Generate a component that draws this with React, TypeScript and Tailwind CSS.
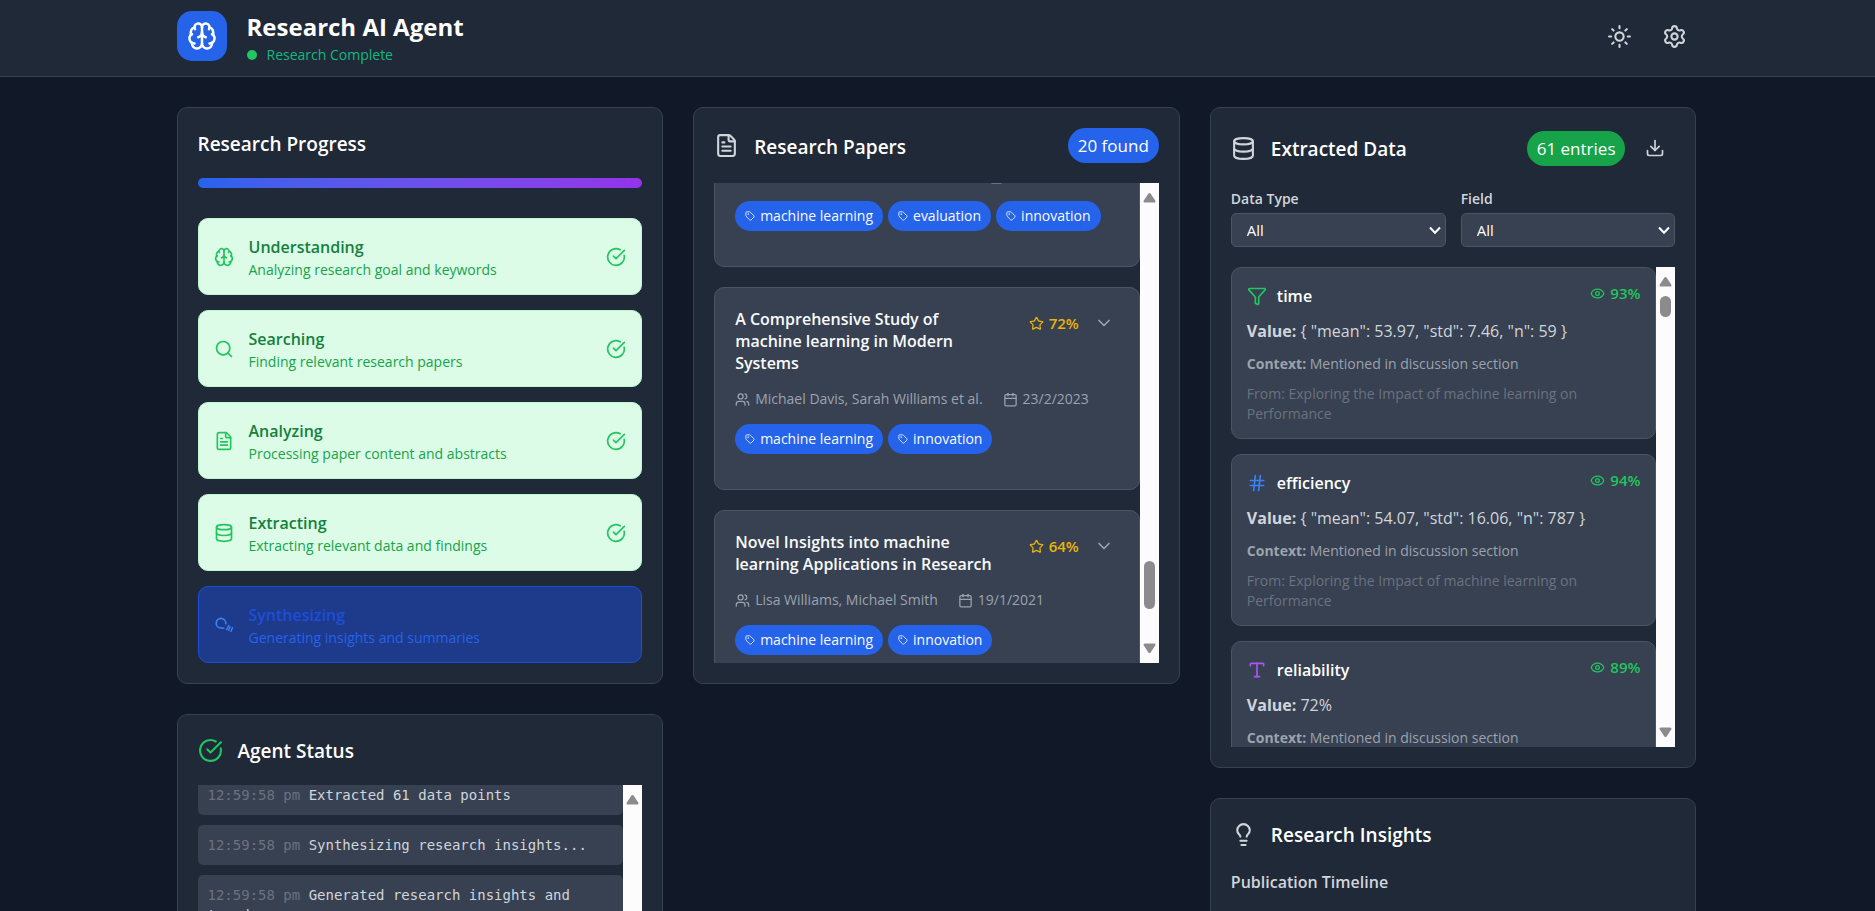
import React, { useEffect, useRef } from 'react';
import {
  Brain,
  Calendar,
  ChevronDown,
  CircleCheckBig,
  Database,
  Download,
  Eye,
  FileText,
  Funnel,
  Hash,
  Lightbulb,
  Search,
  Settings,
  Star,
  Sun,
  Tag,
  Type,
  Users,
  type LucideIcon,
} from 'lucide-react';

interface Step {
  title: string;
  description: string;
  icon: LucideIcon;
}

interface Paper {
  title: string;
  authors: string;
  date: string;
  score: number;
  tags: string[];
}

interface Entry {
  field: string;
  icon: LucideIcon;
  iconColor: string;
  value: string;
  confidence: number;
}

const steps: Step[] = [
  { title: 'Understanding', description: 'Analyzing research goal and keywords', icon: Brain },
  { title: 'Searching', description: 'Finding relevant research papers', icon: Search },
  { title: 'Analyzing', description: 'Processing paper content and abstracts', icon: FileText },
  { title: 'Extracting', description: 'Extracting relevant data and findings', icon: Database },
];

const papers: Paper[] = [
  {
    title: 'Exploring the Impact of machine learning on Performance',
    authors: 'Lisa Williams, Emma Brown et al.',
    date: '14/3/2022',
    score: 75,
    tags: ['machine learning', 'evaluation', 'innovation'],
  },
  {
    title: 'A Comprehensive Study of machine learning in Modern Systems',
    authors: 'Michael Davis, Sarah Williams et al.',
    date: '23/2/2023',
    score: 72,
    tags: ['machine learning', 'innovation'],
  },
  {
    title: 'Novel Insights into machine learning Applications in Research',
    authors: 'Lisa Williams, Michael Smith',
    date: '19/1/2021',
    score: 64,
    tags: ['machine learning', 'innovation'],
  },
];

const entries: Entry[] = [
  { field: 'time', icon: Funnel, iconColor: 'text-[#22c55e]', value: '{ "mean": 53.97, "std": 7.46, "n": 59 }', confidence: 93 },
  { field: 'efficiency', icon: Hash, iconColor: 'text-[#3b82f6]', value: '{ "mean": 54.07, "std": 16.06, "n": 787 }', confidence: 94 },
  { field: 'reliability', icon: Type, iconColor: 'text-[#a855f7]', value: '72%', confidence: 89 },
];

const logs = [
  'Extracted 61 data points',
  'Synthesizing research insights...',
  'Generated research insights and trends',
];

const Card: React.FC<{ children: React.ReactNode }> = ({ children }) => (
  <section className="rounded-[10px] border border-[#374151] bg-[#1f2937] p-5">{children}</section>
);

const Heading: React.FC<{ children: React.ReactNode }> = ({ children }) => (
  <h2 className="flex-1 pt-0.5 text-[19px] leading-7 font-semibold text-white">{children}</h2>
);

interface ScrollAreaProps {
  start?: number;
  thumb: string;
  gap: string;
  children: React.ReactNode;
}

// Scrolling list with a light track, arrows and thumb on its right side
const ScrollArea: React.FC<ScrollAreaProps> = ({ start = 0, thumb, gap, children }) => {
  const ref = useRef<HTMLDivElement>(null);

  useEffect(() => {
    if (ref.current) ref.current.scrollTop = start;
  }, [start]);

  return (
    <div className="flex h-[480px]">
      <div ref={ref} className={`flex min-w-0 flex-1 flex-col overflow-y-auto [scrollbar-width:none] ${gap}`}>
        {children}
      </div>
      <div className="relative flex w-[19px] shrink-0 flex-col items-center justify-between bg-[#fcfcfc] py-[9px]">
        <svg width="13" height="11" viewBox="0 0 13 11" fill="#8b8b8b">
          <path d="M5.4 1.6 Q6.5 .3 7.6 1.6 L12.2 8.4 Q13 10.6 11 10.6 H2 Q0 10.6 .8 8.4 Z" />
        </svg>
        <div className={`absolute left-1 w-[11px] rounded-full bg-[#8b8b8b] ${thumb}`} />
        <svg width="13" height="11" viewBox="0 0 13 11" fill="#8b8b8b">
          <path d="M5.4 9.4 Q6.5 10.7 7.6 9.4 L12.2 2.6 Q13 .4 11 .4 H2 Q0 .4 .8 2.6 Z" />
        </svg>
      </div>
    </div>
  );
};

const ProgressPanel: React.FC = () => (
  <Card>
    <div className="mb-5 flex">
      <Heading>Research Progress</Heading>
    </div>
    <div className="mb-[30px] h-2.5 rounded-full bg-gradient-to-r from-[#2563eb] to-[#9333ea]" />
    <ul className="space-y-[15px]">
      {steps.map(step => (
        <li key={step.title} className="flex items-center gap-[15px] rounded-[10px] border border-[#bbf7d0] bg-[#dcfce7] p-[15px]">
          <step.icon size={20} className="shrink-0 text-[#22c55e]" />
          <div className="flex-1">
            <h3 className="text-[16px] leading-[27px] font-semibold text-[#15803d]">{step.title}</h3>
            <p className="text-[14px] leading-[18px] text-[#16a34a]">{step.description}</p>
          </div>
          <CircleCheckBig size={20} className="shrink-0 text-[#22c55e]" />
        </li>
      ))}
      <li className="flex items-center gap-[15px] rounded-[10px] border border-[#1d4ed8] bg-[#1e3a8a] p-[15px]">
        <svg width="20" height="20" viewBox="0 0 20 20" fill="none" stroke="#3b82f6" strokeWidth="1.7">
          <path d="M9.8 13 H6.2 A4.8 4.8 0 1 1 11.8 8.6" strokeLinecap="round" />
          <path d="M12.4 15.2 L15 10 M14.4 15.8 L16.4 11.4 M16.6 17 L18.8 12" strokeWidth="1.4" />
        </svg>
        <div className="flex-1">
          <h3 className="text-[16px] leading-[27px] font-semibold text-[#1d4ed8]">Synthesizing</h3>
          <p className="text-[14px] leading-[18px] text-[#2563eb]">Generating insights and summaries</p>
        </div>
      </li>
    </ul>
  </Card>
);

const StatusPanel: React.FC = () => (
  <Card>
    <div className="mb-5 flex items-center gap-[15px]">
      <CircleCheckBig size={25} className="text-[#22c55e]" />
      <Heading>Agent Status</Heading>
    </div>
    <ScrollArea start={10} thumb="top-[340px] h-[110px]" gap="gap-2.5">
      {logs.map(log => (
        <p key={log} className="shrink-0 rounded-[5px] bg-[#374151] p-2.5 font-['DejaVu_Sans_Mono',monospace] text-[14px] leading-5 text-[#d1d5db]">
          <span className="text-[#6b7280]">12:59:58 pm</span> {log}
        </p>
      ))}
      <div className="h-[400px] shrink-0" />
    </ScrollArea>
  </Card>
);

const PaperCard: React.FC<{ paper: Paper }> = ({ paper }) => (
  <article className="shrink-0 rounded-[10px] border border-[#4b5563] bg-[#374151] px-5 pt-5 pb-[35px]">
    <div className="mb-[15px] flex items-start gap-2.5">
      <h3 className="flex-1 pr-[15px] text-[16px] leading-[22px] font-semibold text-[#f9fafb]">{paper.title}</h3>
      <span className="flex h-[30px] items-center gap-[5px] text-[15px] font-semibold text-[#eab308]">
        <Star size={15} />
        {paper.score}%
      </span>
      <button type="button" aria-label="Expand paper" className="p-[5px] text-[#9ca3af]">
        <ChevronDown size={20} />
      </button>
    </div>
    <div className="mb-[15px] flex gap-5 text-[14px] leading-5 whitespace-nowrap text-[#9ca3af]">
      <span className="flex items-center gap-[5px]">
        <Users size={15} />
        {paper.authors}
      </span>
      <span className="flex items-center gap-[5px]">
        <Calendar size={15} />
        {paper.date}
      </span>
    </div>
    <div className="flex gap-[5px]">
      {paper.tags.map(tag => (
        <span key={tag} className="flex items-center gap-[5px] rounded-full bg-[#2563eb] px-2.5 py-[5px] text-[14px] leading-5 font-medium text-[#f9fafb]">
          <Tag size={10} />
          {tag}
        </span>
      ))}
    </div>
  </article>
);

const PapersPanel: React.FC = () => (
  <Card>
    <div className="mb-5 flex items-center gap-[15px]">
      <FileText size={25} className="text-[#d1d5db]" />
      <Heading>Research Papers</Heading>
      <span className="rounded-full bg-[#2563eb] px-2.5 py-[5px] text-[17px] leading-[25px] text-white">20 found</span>
    </div>
    <ScrollArea start={97} thumb="top-[378px] h-12" gap="gap-5">
      {papers.map(paper => (
        <PaperCard key={paper.title} paper={paper} />
      ))}
    </ScrollArea>
  </Card>
);

const FilterSelect: React.FC<{ id: string; label: string }> = ({ id, label }) => (
  <div className="relative">
    <label htmlFor={id} className="mb-1 block pt-px text-[14px] leading-5 font-semibold text-[#d1d5db]">
      {label}
    </label>
    <select id={id} className="block h-[34px] w-full appearance-none rounded-[5px] border border-[#4b5563] bg-[#374151] px-[15px] text-[15px] text-white">
      <option>All</option>
    </select>
    <svg className="pointer-events-none absolute right-[5px] bottom-[12px]" width="12" height="9" viewBox="0 0 12 9" fill="none" stroke="white" strokeWidth="2">
      <path d="M1 1.5 L6 6.8 L11 1.5" />
    </svg>
  </div>
);

const EntryCard: React.FC<{ entry: Entry }> = ({ entry }) => (
  <article className="shrink-0 rounded-[10px] border border-[#4b5563] bg-[#374151] px-[15px] pt-[15px] pb-[14px]">
    <div className="mb-[11px] flex items-start justify-between">
      <div className="flex items-center gap-2.5">
        <entry.icon size={20} className={entry.iconColor} />
        <h3 className="pt-0.5 text-[16px] leading-[23px] font-semibold text-white">{entry.field}</h3>
      </div>
      <span className="flex items-center gap-[5px] text-[15px] leading-5 font-semibold text-[#22c55e]">
        <Eye size={15} />
        {entry.confidence}%
      </span>
    </div>
    <p className="mb-2.5 text-[16px] leading-[25px] text-[#d1d5db]">
      <strong>Value:</strong> {entry.value}
    </p>
    <p className="mb-2.5 text-[14px] leading-5 text-[#9ca3af]">
      <strong>Context:</strong> Mentioned in discussion section
    </p>
    <p className="text-[14px] leading-5 text-[#6b7280]">From: Exploring the Impact of machine learning on Performance</p>
  </article>
);

const DataPanel: React.FC = () => (
  <Card>
    <div className="mb-5 flex items-center gap-[15px]">
      <Database size={25} className="text-[#d1d5db]" />
      <Heading>Extracted Data</Heading>
      <div className="flex items-center gap-2.5">
        <span className="rounded-full bg-[#16a34a] px-2.5 py-[5px] text-[17px] leading-[25px] text-white">61 entries</span>
        <button type="button" aria-label="Download data" className="p-2.5 text-[#d1d5db]">
          <Download size={20} />
        </button>
      </div>
    </div>
    <div className="mb-5 grid grid-cols-2 gap-[15px]">
      <FilterSelect id="data-type" label="Data Type" />
      <FilterSelect id="field" label="Field" />
    </div>
    <ScrollArea thumb="top-[29px] h-[21px]" gap="gap-[15px]">
      {entries.map(entry => (
        <EntryCard key={entry.field} entry={entry} />
      ))}
    </ScrollArea>
  </Card>
);

const InsightsPanel: React.FC = () => (
  <Card>
    <div className="mb-5 flex items-center gap-[15px]">
      <Lightbulb size={25} className="text-[#d1d5db]" />
      <Heading>Research Insights</Heading>
    </div>
    <h3 className="text-[16px] leading-[27px] font-semibold text-[#d1d5db]">Publication Timeline</h3>
    <div className="h-[200px]" />
  </Card>
);

const App: React.FC = () => (
  <div className="h-screen overflow-hidden bg-[#111827] font-['Segoe_UI','Open_Sans','Noto_Sans',sans-serif]">
    <header className="border-b border-[#374151] bg-[#1f2937]">
      <div className="mx-auto flex max-w-[1600px] items-center justify-between pt-2 pr-[41px] pb-3 pl-[39px]">
        <div className="flex items-center gap-5">
          <div className="rounded-[15px] bg-[#2563eb] p-2.5 text-white">
            <Brain size={30} />
          </div>
          <div>
            <h1 className="text-[24px] leading-[38px] font-bold text-white">Research AI Agent</h1>
            <p className="flex items-center gap-2.5 text-[14px] leading-[18px] text-[#10b981]">
              <span className="size-2.5 rounded-full bg-[#22c55e]" />
              Research Complete
            </p>
          </div>
        </div>
        <div className="flex gap-2.5 text-[#d1d5db]">
          <button type="button" aria-label="Toggle theme" className="p-2.5">
            <Sun size={25} />
          </button>
          <button type="button" aria-label="Settings" className="p-2.5">
            <Settings size={25} />
          </button>
        </div>
      </div>
    </header>
    <main className="mx-auto grid max-w-[1600px] grid-cols-3 items-start gap-[30px] py-[30px] pr-[41px] pl-[39px]">
      <div className="space-y-[30px]">
        <ProgressPanel />
        <StatusPanel />
      </div>
      <PapersPanel />
      <div className="space-y-[30px]">
        <DataPanel />
        <InsightsPanel />
      </div>
    </main>
  </div>
);

export default App;
